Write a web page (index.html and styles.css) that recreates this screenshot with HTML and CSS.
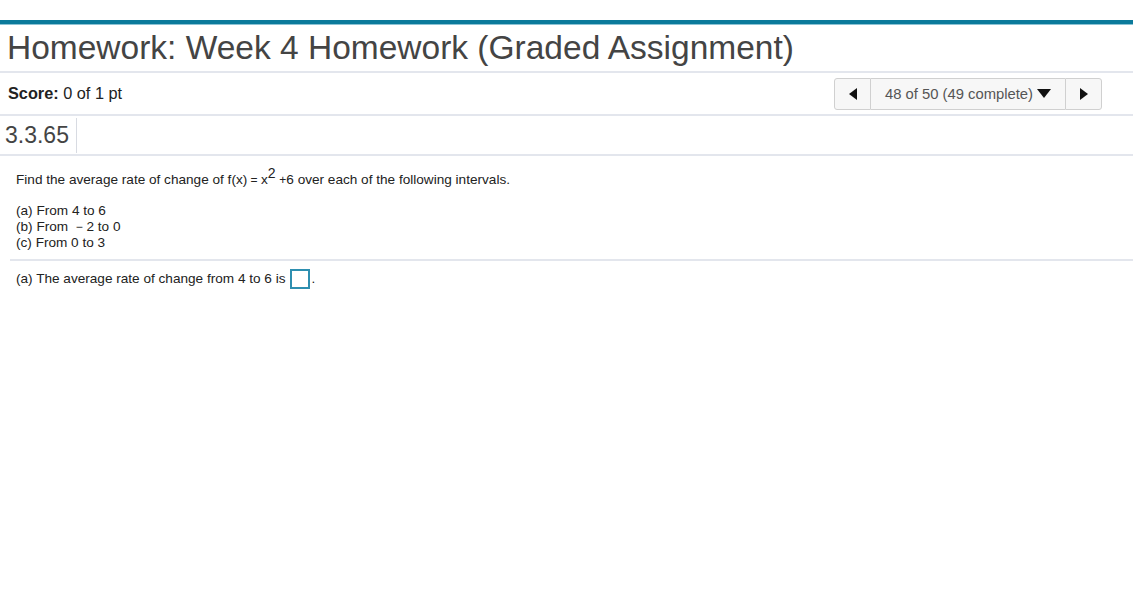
FILE: index.html
```html
<!DOCTYPE html>
<html lang='en'>
<head>
	<meta charset='UTF-8'>
	<title>Homework</title>
	<link rel="stylesheet" href="styles.css">
</head>
<body>
<div class='topbar'></div>

<h1 class='title'>Homework: Week 4 Homework (Graded Assignment)</h1>

<div class='score-row'>
	<div class='score'><b>Score:</b> 0 of 1 pt</div>
	<div class='nav'>
		<button class='nav__button nav__button--side'><span class='tri tri--left'></span></button>
		<button class='nav__button nav__button--mid'>48 of 50 (49 complete) <span class='tri tri--down'></span></button>
		<button class='nav__button nav__button--side'><span class='tri tri--right'></span></button>
	</div>
</div>

<div class='qnum-row'>
	<div class='qnum'>3.3.65</div>
</div>

<div class='question'>
	<p class='question__text'>Find the average rate of change of f(x)<span class='eq'> = </span>x<sup>2</sup> <span class='plus'>+</span>6 over each of the following intervals.</p>
	<div class='question__parts'>
		<div>(a) From 4 to 6</div>
		<div>(b) From &nbsp;<span class='minus'>&minus;</span> 2 to 0</div>
		<div>(c) From 0 to 3</div>
	</div>
	<div class='answer'>
		(a) The average rate of change from 4 to 6 is <span class='answer__box'></span>.
	</div>
</div>
</body>
</html>
```

FILE: styles.css
```css
body {
    margin: 0;
    font-family: "Liberation Sans", Arial, sans-serif;
    color: #222;
    background: #fff;
}

.topbar {
    height: 20px;
    border-bottom: 4px solid #0b7a9b;
    box-shadow: 0 1px 0 #8cc3d4;
}

.title {
    margin: 1px 0 0;
    padding: 4px 7px 5px;
    height: 37px;
    font-size: 33.5px;
    font-weight: normal;
    color: #444;
    line-height: 37px;
    border-bottom: 2px solid #e3e6ed;
}

.score-row {
    display: flex;
    align-items: center;
    justify-content: space-between;
    height: 41px;
    padding: 0 31px 0 8px;
    border-bottom: 2px solid #e3e6ed;
}

.score {
    font-size: 16.3px;
    color: #222;
}

.nav {
    display: flex;
}

.nav__button {
    height: 32px;
    border: 1px solid #d0d0d0;
    background: #f7f7f7;
    font-family: inherit;
    font-size: 14.8px;
    color: #555;
    display: flex;
    align-items: center;
    justify-content: center;
    padding: 0;
}

.nav__button--side {
    width: 37px;
}

.nav__button--side:first-child {
    border-radius: 3px 0 0 3px;
}

.nav__button--side:last-child {
    border-radius: 0 3px 3px 0;
}

.nav__button--mid {
    width: 194px;
    border-left: none;
    border-right: none;
    gap: 4px;
}

.tri {
    display: inline-block;
    width: 0;
    height: 0;
}

.tri--left {
    border-top: 6px solid transparent;
    border-bottom: 6px solid transparent;
    border-right: 8px solid #111;
}

.tri--right {
    border-top: 6px solid transparent;
    border-bottom: 6px solid transparent;
    border-left: 8px solid #111;
}

.tri--down {
    border-left: 7px solid transparent;
    border-right: 7px solid transparent;
    border-top: 9px solid #111;
}

.qnum-row {
    height: 38px;
    display: flex;
    align-items: stretch;
    border-bottom: 2px solid #e3e6ed;
}

.qnum {
    font-size: 23px;
    color: #444;
    padding: 0 6px 0 5px;
    width: 65px;
    display: flex;
    align-items: center;
    border-right: 1px solid #d8dbe2;
    margin: 2px 0 1px;
}

.question {
    padding: 15px 0 0 16px;
    font-size: 13.6px;
    color: #222;
}

.question__text {
    margin: 0 0 14px;
    line-height: 18px;
}

.question__text sup {
    font-size: 14px;
    line-height: 0;
}

.eq, .plus {
    font-size: 12px;
}

.question__parts {
    line-height: 15.5px;
    padding-bottom: 8px;
    margin-left: -6px;
    padding-left: 6px;
    border-bottom: 2px solid #e3e6ed;
}

.minus {
    font-size: 12px;
}

.answer {
    display: flex;
    align-items: center;
    padding-top: 8px;
}

.answer__box {
    display: inline-block;
    width: 16px;
    height: 16px;
    border: 2px solid #2e8fb0;
    margin-left: 4px;
    margin-right: 2px;
}
```
